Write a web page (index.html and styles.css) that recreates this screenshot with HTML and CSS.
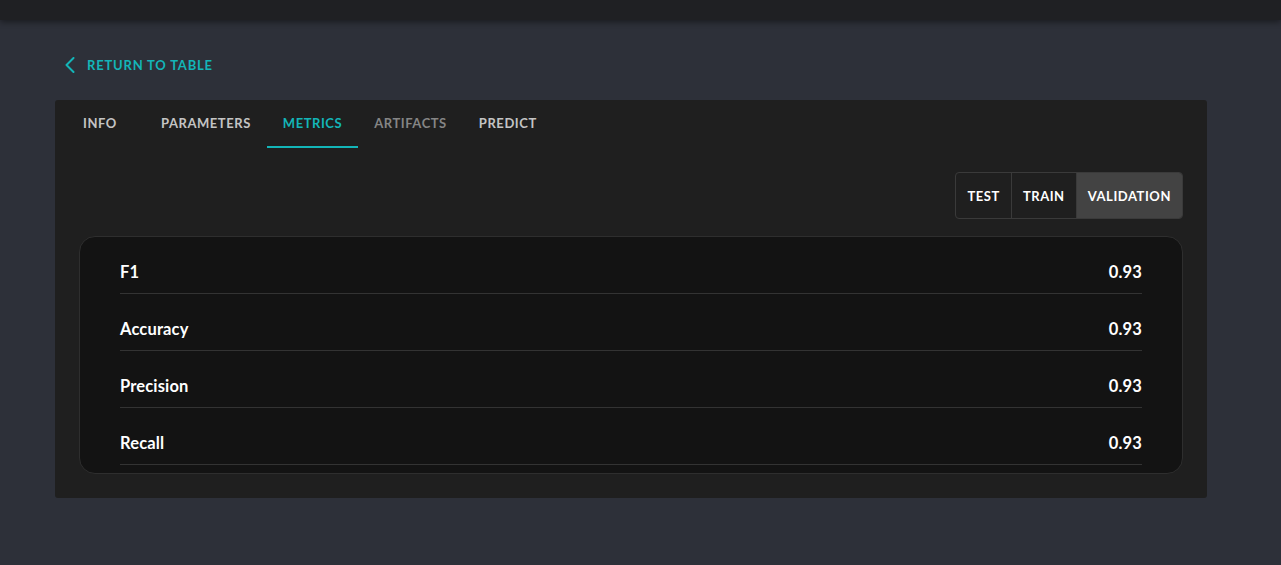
FILE: index.html
```html
<!DOCTYPE html>
<html lang="en">
<head>
    <meta charset="UTF-8">
    <meta name="viewport" content="width=device-width, initial-scale=1.0">
    <title>Model metrics</title>
    <link rel="stylesheet" href="styles.css">
</head>
<body>
    <div class="topbar"></div>

    <div class="page">
        <!-- back link -->
        <a class="back-link" href="#">
            <svg class="back-icon" width="12" height="16" viewBox="0 0 12 16">
                <path d="M9.5 1 L2.5 8 L9.5 15" fill="none" stroke="#13b5b8" stroke-width="2" stroke-linecap="round" stroke-linejoin="round"/>
            </svg>
            <span>RETURN TO TABLE</span>
        </a>

        <div class="card">
            <!-- tabs -->
            <div class="tabs">
                <div class="tab">INFO</div>
                <div class="tab">PARAMETERS</div>
                <div class="tab active">METRICS</div>
                <div class="tab disabled">ARTIFACTS</div>
                <div class="tab">PREDICT</div>
            </div>

            <div class="card-body">
                <div class="toolbar">
                    <div class="btn-group">
                        <button class="btn">TEST</button>
                        <button class="btn">TRAIN</button>
                        <button class="btn selected">VALIDATION</button>
                    </div>
                </div>

                <div class="metrics">
                    <div class="metric-row"><span>F1</span><span>0.93</span></div>
                    <div class="metric-row"><span>Accuracy</span><span>0.93</span></div>
                    <div class="metric-row"><span>Precision</span><span>0.93</span></div>
                    <div class="metric-row"><span>Recall</span><span>0.93</span></div>
                </div>
            </div>
        </div>
    </div>
</body>
</html>
```

FILE: styles.css
```css
/* global */
body, html {
    margin: 0;
    padding: 0;
    height: 100%;
    background-color: #2d3039;
    font-family: 'Lato', 'Open Sans', sans-serif;
    overflow: hidden;
}

.topbar {
    height: 20px;
    background-color: #1f2023;
    box-shadow: 0 2px 6px rgba(0, 0, 0, 0.45);
}

.page {
    padding: 0 55px;
    width: 1152px;
}

/* back link */
.back-link {
    display: flex;
    align-items: center;
    gap: 11px;
    margin-top: 37px;
    margin-left: 9px;
    height: 16px;
    color: #13b5b8;
    text-decoration: none;
    font-size: 13px;
    font-weight: 700;
    letter-spacing: 0.8px;
}

.back-icon {
    display: block;
}

/* card */
.card {
    margin-top: 27px;
    background-color: #1f1f1f;
    border-radius: 3px;
    height: 398px;
}

.tabs {
    display: flex;
    height: 48px;
}

.tab {
    min-width: 58px;
    padding: 0 16px;
    display: flex;
    align-items: center;
    justify-content: center;
    color: #c4c4c4;
    font-size: 13px;
    font-weight: 700;
    letter-spacing: 0.55px;
    box-sizing: content-box;
    border-bottom: 2px solid transparent;
    height: 46px;
}

.tab.active {
    color: #13b5b8;
    border-bottom-color: #13b5b8;
}

.tab.disabled {
    color: #858585;
}

.card-body {
    padding: 24px 24px 0;
}

.toolbar {
    display: flex;
    justify-content: flex-end;
}

.btn-group {
    display: flex;
    border: 1px solid #3a3a3a;
    border-radius: 4px;
    overflow: hidden;
    height: 45px;
}

.btn {
    background: transparent;
    border: none;
    border-left: 1px solid #3a3a3a;
    color: #ffffff;
    font-family: inherit;
    font-size: 13px;
    font-weight: 700;
    padding: 0 11px;
    letter-spacing: 0.55px;
}

.btn:first-child {
    border-left: none;
}

.btn.selected {
    background-color: #434343;
}

/* metrics list */
.metrics {
    margin-top: 17px;
    background-color: #131313;
    border: 1px solid #2e2e2e;
    border-radius: 16px;
    padding: 0 40px 8px;
}

.metric-row {
    display: flex;
    justify-content: space-between;
    padding-top: 15px;
    line-height: 41px;
    border-bottom: 1px solid #333333;
    color: #ffffff;
    font-size: 16.5px;
    font-weight: 700;
    letter-spacing: 0.15px;
}
```
